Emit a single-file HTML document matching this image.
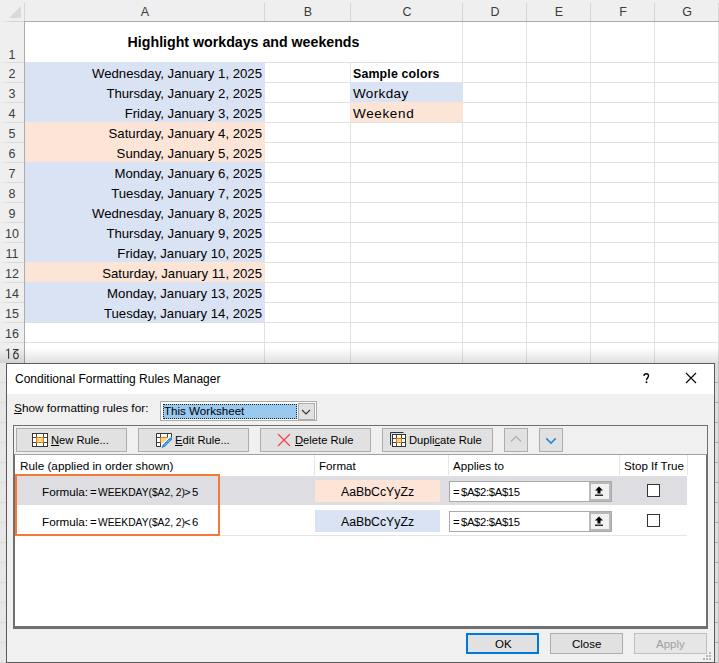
<!DOCTYPE html><html><head><meta charset="utf-8"><style>
*{margin:0;padding:0;box-sizing:border-box}
html,body{width:719px;height:663px;overflow:hidden;background:#fff;position:relative;font-family:"Liberation Sans",sans-serif}
.a{position:absolute}
.t{position:absolute;white-space:nowrap;line-height:20px;height:20px;color:#000}
.b{position:absolute;background:#e1e1e1;border:1px solid #adadad}
.u{text-decoration:underline;text-decoration-thickness:1px;text-underline-offset:0.5px}
</style></head><body>
<div class="a" style="left:0px;top:0px;width:719px;height:21px;background:#efefef"></div>
<div class="a" style="left:0px;top:0px;width:24px;height:663px;background:#efefef"></div>
<div class="a" style="left:264px;top:3px;width:1px;height:18px;background:#d6d6d6"></div>
<div class="a" style="left:350px;top:3px;width:1px;height:18px;background:#d6d6d6"></div>
<div class="a" style="left:462px;top:3px;width:1px;height:18px;background:#d6d6d6"></div>
<div class="a" style="left:526px;top:3px;width:1px;height:18px;background:#d6d6d6"></div>
<div class="a" style="left:590px;top:3px;width:1px;height:18px;background:#d6d6d6"></div>
<div class="a" style="left:654px;top:3px;width:1px;height:18px;background:#d6d6d6"></div>
<div class="a" style="left:718px;top:3px;width:1px;height:18px;background:#d6d6d6"></div>
<div class="t" style="left:25px;top:2px;font-size:12.5px;width:240px;text-align:center;color:#3c3c3c">A</div>
<div class="t" style="left:265px;top:2px;font-size:12.5px;width:86px;text-align:center;color:#3c3c3c">B</div>
<div class="t" style="left:351px;top:2px;font-size:12.5px;width:112px;text-align:center;color:#3c3c3c">C</div>
<div class="t" style="left:463px;top:2px;font-size:12.5px;width:64px;text-align:center;color:#3c3c3c">D</div>
<div class="t" style="left:527px;top:2px;font-size:12.5px;width:64px;text-align:center;color:#3c3c3c">E</div>
<div class="t" style="left:591px;top:2px;font-size:12.5px;width:64px;text-align:center;color:#3c3c3c">F</div>
<div class="t" style="left:655px;top:2px;font-size:12.5px;width:64px;text-align:center;color:#3c3c3c">G</div>
<div class="a" style="left:25px;top:62px;width:694px;height:1px;background:#e1e1e1"></div>
<div class="a" style="left:0px;top:62px;width:24px;height:1px;background:linear-gradient(to right,#efefef,#d9d9d9 40%)"></div>
<div class="a" style="left:25px;top:82px;width:694px;height:1px;background:#e1e1e1"></div>
<div class="a" style="left:0px;top:82px;width:24px;height:1px;background:linear-gradient(to right,#efefef,#d9d9d9 40%)"></div>
<div class="a" style="left:25px;top:102px;width:694px;height:1px;background:#e1e1e1"></div>
<div class="a" style="left:0px;top:102px;width:24px;height:1px;background:linear-gradient(to right,#efefef,#d9d9d9 40%)"></div>
<div class="a" style="left:25px;top:122px;width:694px;height:1px;background:#e1e1e1"></div>
<div class="a" style="left:0px;top:122px;width:24px;height:1px;background:linear-gradient(to right,#efefef,#d9d9d9 40%)"></div>
<div class="a" style="left:25px;top:142px;width:694px;height:1px;background:#e1e1e1"></div>
<div class="a" style="left:0px;top:142px;width:24px;height:1px;background:linear-gradient(to right,#efefef,#d9d9d9 40%)"></div>
<div class="a" style="left:25px;top:162px;width:694px;height:1px;background:#e1e1e1"></div>
<div class="a" style="left:0px;top:162px;width:24px;height:1px;background:linear-gradient(to right,#efefef,#d9d9d9 40%)"></div>
<div class="a" style="left:25px;top:182px;width:694px;height:1px;background:#e1e1e1"></div>
<div class="a" style="left:0px;top:182px;width:24px;height:1px;background:linear-gradient(to right,#efefef,#d9d9d9 40%)"></div>
<div class="a" style="left:25px;top:202px;width:694px;height:1px;background:#e1e1e1"></div>
<div class="a" style="left:0px;top:202px;width:24px;height:1px;background:linear-gradient(to right,#efefef,#d9d9d9 40%)"></div>
<div class="a" style="left:25px;top:222px;width:694px;height:1px;background:#e1e1e1"></div>
<div class="a" style="left:0px;top:222px;width:24px;height:1px;background:linear-gradient(to right,#efefef,#d9d9d9 40%)"></div>
<div class="a" style="left:25px;top:242px;width:694px;height:1px;background:#e1e1e1"></div>
<div class="a" style="left:0px;top:242px;width:24px;height:1px;background:linear-gradient(to right,#efefef,#d9d9d9 40%)"></div>
<div class="a" style="left:25px;top:262px;width:694px;height:1px;background:#e1e1e1"></div>
<div class="a" style="left:0px;top:262px;width:24px;height:1px;background:linear-gradient(to right,#efefef,#d9d9d9 40%)"></div>
<div class="a" style="left:25px;top:282px;width:694px;height:1px;background:#e1e1e1"></div>
<div class="a" style="left:0px;top:282px;width:24px;height:1px;background:linear-gradient(to right,#efefef,#d9d9d9 40%)"></div>
<div class="a" style="left:25px;top:302px;width:694px;height:1px;background:#e1e1e1"></div>
<div class="a" style="left:0px;top:302px;width:24px;height:1px;background:linear-gradient(to right,#efefef,#d9d9d9 40%)"></div>
<div class="a" style="left:25px;top:322px;width:694px;height:1px;background:#e1e1e1"></div>
<div class="a" style="left:0px;top:322px;width:24px;height:1px;background:linear-gradient(to right,#efefef,#d9d9d9 40%)"></div>
<div class="a" style="left:25px;top:342px;width:694px;height:1px;background:#e1e1e1"></div>
<div class="a" style="left:0px;top:342px;width:24px;height:1px;background:linear-gradient(to right,#efefef,#d9d9d9 40%)"></div>
<div class="a" style="left:715px;top:382px;width:4px;height:1px;background:#c8c8c8"></div>
<div class="a" style="left:0px;top:382px;width:6px;height:1px;background:#e4e4e4"></div>
<div class="a" style="left:715px;top:402px;width:4px;height:1px;background:#c8c8c8"></div>
<div class="a" style="left:0px;top:402px;width:6px;height:1px;background:#e4e4e4"></div>
<div class="a" style="left:715px;top:422px;width:4px;height:1px;background:#c8c8c8"></div>
<div class="a" style="left:0px;top:422px;width:6px;height:1px;background:#e4e4e4"></div>
<div class="a" style="left:715px;top:442px;width:4px;height:1px;background:#c8c8c8"></div>
<div class="a" style="left:0px;top:442px;width:6px;height:1px;background:#e4e4e4"></div>
<div class="a" style="left:715px;top:462px;width:4px;height:1px;background:#c8c8c8"></div>
<div class="a" style="left:0px;top:462px;width:6px;height:1px;background:#e4e4e4"></div>
<div class="a" style="left:715px;top:482px;width:4px;height:1px;background:#c8c8c8"></div>
<div class="a" style="left:0px;top:482px;width:6px;height:1px;background:#e4e4e4"></div>
<div class="a" style="left:715px;top:502px;width:4px;height:1px;background:#c8c8c8"></div>
<div class="a" style="left:0px;top:502px;width:6px;height:1px;background:#e4e4e4"></div>
<div class="a" style="left:715px;top:522px;width:4px;height:1px;background:#c8c8c8"></div>
<div class="a" style="left:0px;top:522px;width:6px;height:1px;background:#e4e4e4"></div>
<div class="a" style="left:715px;top:542px;width:4px;height:1px;background:#c8c8c8"></div>
<div class="a" style="left:0px;top:542px;width:6px;height:1px;background:#e4e4e4"></div>
<div class="a" style="left:715px;top:562px;width:4px;height:1px;background:#c8c8c8"></div>
<div class="a" style="left:0px;top:562px;width:6px;height:1px;background:#e4e4e4"></div>
<div class="a" style="left:715px;top:582px;width:4px;height:1px;background:#c8c8c8"></div>
<div class="a" style="left:0px;top:582px;width:6px;height:1px;background:#e4e4e4"></div>
<div class="a" style="left:715px;top:602px;width:4px;height:1px;background:#c8c8c8"></div>
<div class="a" style="left:0px;top:602px;width:6px;height:1px;background:#e4e4e4"></div>
<div class="a" style="left:715px;top:622px;width:4px;height:1px;background:#c8c8c8"></div>
<div class="a" style="left:0px;top:622px;width:6px;height:1px;background:#e4e4e4"></div>
<div class="a" style="left:715px;top:642px;width:4px;height:1px;background:#c8c8c8"></div>
<div class="a" style="left:0px;top:642px;width:6px;height:1px;background:#e4e4e4"></div>
<div class="a" style="left:715px;top:662px;width:4px;height:1px;background:#c8c8c8"></div>
<div class="a" style="left:0px;top:662px;width:6px;height:1px;background:#e4e4e4"></div>
<div class="a" style="left:264px;top:62px;width:1px;height:601px;background:#e1e1e1"></div>
<div class="a" style="left:350px;top:62px;width:1px;height:601px;background:#e1e1e1"></div>
<div class="a" style="left:462px;top:62px;width:1px;height:601px;background:#e1e1e1"></div>
<div class="a" style="left:526px;top:62px;width:1px;height:601px;background:#e1e1e1"></div>
<div class="a" style="left:590px;top:62px;width:1px;height:601px;background:#e1e1e1"></div>
<div class="a" style="left:654px;top:62px;width:1px;height:601px;background:#e1e1e1"></div>
<div class="a" style="left:718px;top:62px;width:1px;height:601px;background:#e1e1e1"></div>
<div class="a" style="left:462px;top:22px;width:1px;height:40px;background:#e1e1e1"></div>
<div class="a" style="left:526px;top:22px;width:1px;height:40px;background:#e1e1e1"></div>
<div class="a" style="left:590px;top:22px;width:1px;height:40px;background:#e1e1e1"></div>
<div class="a" style="left:654px;top:22px;width:1px;height:40px;background:#e1e1e1"></div>
<div class="a" style="left:718px;top:22px;width:1px;height:40px;background:#e1e1e1"></div>
<svg class="a" style="left:0;top:0" width="24" height="21"><polygon points="9,18 21,18 21,6" fill="#d9d9d9"/></svg>
<div class="a" style="left:0px;top:21px;width:24px;height:1px;background:linear-gradient(to right,#efefef,#d4d4d4 50%)"></div>
<div class="a" style="left:24px;top:21px;width:695px;height:1px;background:#ababab"></div>
<div class="a" style="left:24px;top:3px;width:1px;height:18px;background:#d6d6d6"></div>
<div class="a" style="left:24px;top:21px;width:1px;height:642px;background:#ababab"></div>
<div class="t" style="left:0px;top:45px;font-size:12.5px;width:24px;text-align:center;color:#3c3c3c">1</div>
<div class="t" style="left:0px;top:64px;font-size:12.5px;width:24px;text-align:center;color:#3c3c3c">2</div>
<div class="t" style="left:0px;top:84px;font-size:12.5px;width:24px;text-align:center;color:#3c3c3c">3</div>
<div class="t" style="left:0px;top:104px;font-size:12.5px;width:24px;text-align:center;color:#3c3c3c">4</div>
<div class="t" style="left:0px;top:124px;font-size:12.5px;width:24px;text-align:center;color:#3c3c3c">5</div>
<div class="t" style="left:0px;top:144px;font-size:12.5px;width:24px;text-align:center;color:#3c3c3c">6</div>
<div class="t" style="left:0px;top:164px;font-size:12.5px;width:24px;text-align:center;color:#3c3c3c">7</div>
<div class="t" style="left:0px;top:184px;font-size:12.5px;width:24px;text-align:center;color:#3c3c3c">8</div>
<div class="t" style="left:0px;top:204px;font-size:12.5px;width:24px;text-align:center;color:#3c3c3c">9</div>
<div class="t" style="left:0px;top:224px;font-size:12.5px;width:24px;text-align:center;color:#3c3c3c">10</div>
<div class="t" style="left:0px;top:244px;font-size:12.5px;width:24px;text-align:center;color:#3c3c3c">11</div>
<div class="t" style="left:0px;top:264px;font-size:12.5px;width:24px;text-align:center;color:#3c3c3c">12</div>
<div class="t" style="left:0px;top:284px;font-size:12.5px;width:24px;text-align:center;color:#3c3c3c">14</div>
<div class="t" style="left:0px;top:304px;font-size:12.5px;width:24px;text-align:center;color:#3c3c3c">15</div>
<div class="t" style="left:0px;top:324px;font-size:12.5px;width:24px;text-align:center;color:#3c3c3c">16</div>
<svg class="a" style="left:0;top:342px" width="24" height="20"><path d="M6.3 8.6L8.6 7.2V16.8" stroke="#3c3c3c" stroke-width="1.1" fill="none"/><path d="M13 7.5H18.6" stroke="#3c3c3c" stroke-width="1.1"/><path d="M18.3 8.2C15.5 8.6 13.6 10.5 13.6 13.5C13.6 15.5 14.5 16.6 15.9 16.6C17.5 16.6 18.3 15.4 18.3 13.7C18.3 12 17.4 11 16 11C14.8 11 14 11.8 13.7 12.6" stroke="#3c3c3c" stroke-width="1.05" fill="none"/></svg>
<div class="a" style="left:25px;top:62px;width:240px;height:20px;background:#dae3f3"></div>
<div class="t" style="left:25px;top:64px;font-size:13.4px;width:237px;text-align:right;transform:scaleX(0.983);transform-origin:right top;">Wednesday, January 1, 2025</div>
<div class="a" style="left:25px;top:82px;width:240px;height:20px;background:#dae3f3"></div>
<div class="t" style="left:25px;top:84px;font-size:13.4px;width:237px;text-align:right;transform:scaleX(0.983);transform-origin:right top;">Thursday, January 2, 2025</div>
<div class="a" style="left:25px;top:102px;width:240px;height:20px;background:#dae3f3"></div>
<div class="t" style="left:25px;top:104px;font-size:13.4px;width:237px;text-align:right;transform:scaleX(0.983);transform-origin:right top;">Friday, January 3, 2025</div>
<div class="a" style="left:25px;top:122px;width:240px;height:20px;background:#fce4d6"></div>
<div class="t" style="left:25px;top:124px;font-size:13.4px;width:237px;text-align:right;transform:scaleX(0.983);transform-origin:right top;">Saturday, January 4, 2025</div>
<div class="a" style="left:25px;top:142px;width:240px;height:20px;background:#fce4d6"></div>
<div class="t" style="left:25px;top:144px;font-size:13.4px;width:237px;text-align:right;transform:scaleX(0.983);transform-origin:right top;">Sunday, January 5, 2025</div>
<div class="a" style="left:25px;top:162px;width:240px;height:20px;background:#dae3f3"></div>
<div class="t" style="left:25px;top:164px;font-size:13.4px;width:237px;text-align:right;transform:scaleX(0.983);transform-origin:right top;">Monday, January 6, 2025</div>
<div class="a" style="left:25px;top:182px;width:240px;height:20px;background:#dae3f3"></div>
<div class="t" style="left:25px;top:184px;font-size:13.4px;width:237px;text-align:right;transform:scaleX(0.983);transform-origin:right top;">Tuesday, January 7, 2025</div>
<div class="a" style="left:25px;top:202px;width:240px;height:20px;background:#dae3f3"></div>
<div class="t" style="left:25px;top:204px;font-size:13.4px;width:237px;text-align:right;transform:scaleX(0.983);transform-origin:right top;">Wednesday, January 8, 2025</div>
<div class="a" style="left:25px;top:222px;width:240px;height:20px;background:#dae3f3"></div>
<div class="t" style="left:25px;top:224px;font-size:13.4px;width:237px;text-align:right;transform:scaleX(0.983);transform-origin:right top;">Thursday, January 9, 2025</div>
<div class="a" style="left:25px;top:242px;width:240px;height:20px;background:#dae3f3"></div>
<div class="t" style="left:25px;top:244px;font-size:13.4px;width:237px;text-align:right;transform:scaleX(0.983);transform-origin:right top;">Friday, January 10, 2025</div>
<div class="a" style="left:25px;top:262px;width:240px;height:20px;background:#fce4d6"></div>
<div class="t" style="left:25px;top:264px;font-size:13.4px;width:237px;text-align:right;transform:scaleX(0.983);transform-origin:right top;">Saturday, January 11, 2025</div>
<div class="a" style="left:25px;top:282px;width:240px;height:20px;background:#dae3f3"></div>
<div class="t" style="left:25px;top:284px;font-size:13.4px;width:237px;text-align:right;transform:scaleX(0.983);transform-origin:right top;">Monday, January 13, 2025</div>
<div class="a" style="left:25px;top:302px;width:240px;height:20px;background:#dae3f3"></div>
<div class="t" style="left:25px;top:304px;font-size:13.4px;width:237px;text-align:right;transform:scaleX(0.983);transform-origin:right top;">Tuesday, January 14, 2025</div>
<div class="t" style="left:25px;top:32px;font-size:14.2px;width:437px;text-align:center;font-weight:bold">Highlight workdays and weekends</div>
<div class="a" style="left:350px;top:82px;width:113px;height:20px;background:#dae3f3"></div>
<div class="a" style="left:350px;top:102px;width:113px;height:20px;background:#fce4d6"></div>
<div class="t" style="left:353px;top:64px;font-size:12.4px;font-weight:bold;letter-spacing:0.15px">Sample colors</div>
<div class="t" style="left:353px;top:84px;font-size:13.5px;letter-spacing:0.36px">Workday</div>
<div class="t" style="left:353px;top:104px;font-size:13.5px;letter-spacing:0.65px">Weekend</div>
<div class="a" style="left:0px;top:348px;width:719px;height:15px;background:linear-gradient(to bottom,rgba(0,0,0,0),rgba(0,0,0,0.12))"></div>
<div class="a" style="left:715px;top:363px;width:4px;height:300px;background:rgba(0,0,0,0.13)"></div>
<div class="a" style="left:0px;top:363px;width:6px;height:300px;background:rgba(0,0,0,0.03)"></div>
<div class="a" style="left:6px;top:363px;width:709px;height:300px;border:1px solid #5a5a5a;background:#f0f0f0"></div>
<div class="a" style="left:7px;top:364px;width:707px;height:30px;background:#fff"></div>
<div class="t" style="left:15px;top:369px;font-size:12px;">Conditional Formatting Rules Manager</div>
<svg class="a" style="left:643px;top:373px" width="7" height="11"><path d="M0.9 2.9C1.1 1.3 2.2 0.7 3.2 0.7C4.6 0.7 5.5 1.6 5.5 2.8C5.5 4.6 3.5 4.9 3.5 7.2" stroke="#000" stroke-width="1.35" fill="none"/><circle cx="3.5" cy="9.3" r="0.95" fill="#000"/></svg>
<svg class="a" style="left:685px;top:372px" width="12" height="12"><path d="M1 1L11 11M11 1L1 11" stroke="#000" stroke-width="1.1"/></svg>
<div class="t" style="left:14px;top:398px;font-size:11.8px;"><span class="u">S</span>how formatting rules for:</div>
<div class="a" style="left:160px;top:401px;width:157px;height:20px;border:1px solid #acacac;background:#fff"></div>
<div class="a" style="left:163px;top:404px;width:134px;height:15px;background:#99c9ef;outline:1px dotted #222;outline-offset:-1px"></div>
<div class="t" style="left:164px;top:401px;font-size:11.6px;">This Worksheet</div>
<div class="a" style="left:298px;top:403px;width:17px;height:17px;background:#e1e1e1;border:1px solid #adadad"></div>
<svg class="a" style="left:300px;top:408px" width="12" height="8"><path d="M2 2L6 6L10 2" stroke="#333" fill="none" stroke-width="1.1"/></svg>
<div class="a" style="left:13px;top:425px;width:695px;height:204px;border:1px solid #707070;background:#f0f0f0"></div>
<div class="a" style="left:14px;top:454px;width:693px;height:174px;background:#fff;border-top:1px solid #a0a0a0;border-left:1px solid #707070;border-right:1px solid #707070;border-bottom:2px solid #707070"></div>
<div class="a" style="left:16px;top:428px;width:111px;height:24px;background:#e1e1e1;border:1px solid #adadad"></div>
<div class="a" style="left:138px;top:428px;width:111px;height:24px;background:#e1e1e1;border:1px solid #adadad"></div>
<div class="a" style="left:260px;top:428px;width:111px;height:24px;background:#e1e1e1;border:1px solid #adadad"></div>
<div class="a" style="left:382px;top:428px;width:111px;height:24px;background:#e1e1e1;border:1px solid #adadad"></div>
<div class="a" style="left:504px;top:428px;width:24px;height:24px;background:#e1e1e1;border:1px solid #adadad"></div>
<div class="a" style="left:539px;top:428px;width:24px;height:24px;background:#e1e1e1;border:1px solid #adadad"></div>
<div class="t" style="left:51px;top:430px;font-size:11.2px;"><span class="u">N</span>ew Rule...</div>
<div class="t" style="left:175px;top:430px;font-size:11.2px;"><span class="u">E</span>dit Rule...</div>
<div class="t" style="left:295px;top:430px;font-size:11.2px;"><span class="u">D</span>elete Rule</div>
<div class="t" style="left:409px;top:430px;font-size:11.2px;">Dupli<span class="u">c</span>ate Rule</div>
<svg class="a" style="left:32px;top:433px" width="16" height="14"><rect x="0.5" y="0.5" width="15" height="13" fill="#fff" stroke="#333"/><path d="M4.5 0.5V13.5M11.5 0.5V13.5M0.5 4.5H15.5M0.5 9.5H15.5" stroke="#444"/><rect x="4.5" y="4.5" width="7" height="5" fill="#f7d88c" stroke="#e8770e"/></svg>
<svg class="a" style="left:389px;top:431px" width="18" height="17"><path d="M1.5 14V1.5H14.5" stroke="#333" fill="none"/><rect x="3.5" y="3.5" width="13" height="12" fill="#fff" stroke="#333"/><path d="M7.5 3.5V15.5M12.5 3.5V15.5M3.5 7.5H16.5M3.5 11.5H16.5" stroke="#444"/><rect x="7.5" y="7.5" width="5" height="4" fill="#f7d88c" stroke="#e8770e"/></svg>
<svg class="a" style="left:155px;top:432px" width="19" height="17"><path d="M16.5 5.5V1.5H1.5V14.5H6" stroke="#333" fill="none"/><path d="M2 2H16V5.5L8 14H2Z" fill="#fff"/><path d="M5.5 1.5V14.5M12.5 1.5V5.5M1.5 5.5H5.5M1.5 10.5H5.5" stroke="#444"/><path d="M6 6H13L8 11H6Z" fill="#f7d88c"/><path d="M13 5.5H5.5V10.5" stroke="#e8770e" fill="none"/><path d="M6.7 15.9 L7.45 12.93 L14.75 5.73 A1.5 1.5 0 0 1 16.85 7.87 L9.55 15.07 Z" fill="#2b8ad8"/><path d="M9.3 13.2L15.7 6.8" stroke="#fff" stroke-width="1" stroke-dasharray="1 1.2"/></svg>
<svg class="a" style="left:277px;top:433px" width="14" height="14"><path d="M1.5 1.5L12.5 12.5M12.5 1.5L1.5 12.5" stroke="#f04848" stroke-width="1.3" stroke-linecap="round"/></svg>
<svg class="a" style="left:510px;top:435px" width="12" height="10"><path d="M1 6.5L6 1.5L11 6.5" stroke="#acacac" fill="none" stroke-width="1.2"/></svg>
<svg class="a" style="left:545px;top:436px" width="12" height="10"><path d="M1.3 2.4L6 7.1L10.7 2.4" stroke="#2a8ad4" fill="none" stroke-width="1.6"/></svg>
<div class="t" style="left:20px;top:456px;font-size:11.75px;">Rule (applied in order shown)</div>
<div class="t" style="left:319px;top:456px;font-size:11.6px;">Format</div>
<div class="t" style="left:453px;top:456px;font-size:11.6px;">Applies to</div>
<div class="t" style="left:624px;top:456px;font-size:11.6px;">Stop If True</div>
<div class="a" style="left:314px;top:455px;width:1px;height:20px;background:#e5e5e5"></div>
<div class="a" style="left:448px;top:455px;width:1px;height:20px;background:#e5e5e5"></div>
<div class="a" style="left:619px;top:455px;width:1px;height:20px;background:#e5e5e5"></div>
<div class="a" style="left:687px;top:455px;width:1px;height:20px;background:#e5e5e5"></div>
<div class="a" style="left:15px;top:476px;width:672px;height:29px;background:#dddde2"></div>
<div class="a" style="left:15px;top:535px;width:672px;height:1px;background:#e5e5e5"></div>
<div class="t" style="left:42px;top:482px;font-size:11.7px;">Formula:</div>
<div class="t" style="left:90px;top:482px;font-size:11.4px;">=</div>
<div class="t" style="left:98px;top:482px;font-size:11.4px;transform:scaleX(0.9);transform-origin:left top;">WEEKDAY($A2, 2)</div>
<div class="t" style="left:184px;top:482px;font-size:11.4px;">&gt;</div>
<div class="t" style="left:192px;top:482px;font-size:11.4px;">5</div>
<div class="t" style="left:42px;top:512px;font-size:11.7px;">Formula:</div>
<div class="t" style="left:90px;top:512px;font-size:11.4px;">=</div>
<div class="t" style="left:98px;top:512px;font-size:11.4px;transform:scaleX(0.9);transform-origin:left top;">WEEKDAY($A2, 2)</div>
<div class="t" style="left:184px;top:512px;font-size:11.4px;">&lt;</div>
<div class="t" style="left:192px;top:512px;font-size:11.4px;">6</div>
<div class="a" style="left:315px;top:480px;width:125px;height:22px;background:#fce4d6"></div>
<div class="a" style="left:315px;top:510px;width:125px;height:22px;background:#dae3f3"></div>
<div class="t" style="left:341px;top:482px;font-size:12.3px;color:#000">AaBbCcYyZz</div>
<div class="t" style="left:341px;top:512px;font-size:12.3px;color:#000">AaBbCcYyZz</div>
<div class="a" style="left:449px;top:481px;width:163px;height:21px;background:#fff;border:1px solid #a9a9a9"></div>
<div class="t" style="left:453px;top:482px;font-size:11.3px;">=</div>
<div class="t" style="left:461px;top:482px;font-size:11.3px;letter-spacing:-0.35px">$A$2:$A$15</div>
<div class="a" style="left:589px;top:482px;width:22px;height:19px;background:#f2f2f2;border:2px solid #b9b9b9"></div>
<svg class="a" style="left:594px;top:486px" width="10" height="10"><path d="M5 0.5L1 4.5H3.5V7.5H6.5V4.5H9Z" fill="#000"/><rect x="1" y="8.6" width="8" height="1.2" fill="#000"/></svg>
<div class="a" style="left:647px;top:484px;width:13px;height:13px;background:#fff;border:1px solid #333"></div>
<div class="a" style="left:449px;top:511px;width:163px;height:21px;background:#fff;border:1px solid #a9a9a9"></div>
<div class="t" style="left:453px;top:512px;font-size:11.3px;">=</div>
<div class="t" style="left:461px;top:512px;font-size:11.3px;letter-spacing:-0.35px">$A$2:$A$15</div>
<div class="a" style="left:589px;top:512px;width:22px;height:19px;background:#f2f2f2;border:2px solid #b9b9b9"></div>
<svg class="a" style="left:594px;top:516px" width="10" height="10"><path d="M5 0.5L1 4.5H3.5V7.5H6.5V4.5H9Z" fill="#000"/><rect x="1" y="8.6" width="8" height="1.2" fill="#000"/></svg>
<div class="a" style="left:647px;top:514px;width:13px;height:13px;background:#fff;border:1px solid #333"></div>
<div class="a" style="left:15px;top:474px;width:205px;height:62px;border:2px solid #f37a36"></div>
<div class="a" style="left:466px;top:633px;width:73px;height:21px;background:#e1e1e1;border:2px solid #0078d7"></div>
<div class="a" style="left:550px;top:633px;width:73px;height:21px;background:#e1e1e1;border:1px solid #adadad"></div>
<div class="a" style="left:634px;top:633px;width:73px;height:21px;background:#e6e6e6;border:1px solid #bfbfbf"></div>
<div class="t" style="left:495px;top:634px;font-size:11.5px;">OK</div>
<div class="t" style="left:572px;top:634px;font-size:11.5px;">Close</div>
<div class="t" style="left:656px;top:634px;font-size:11.5px;color:#a0a0a0">Apply</div>
<div class="a" style="left:709px;top:652px;width:2px;height:2px;background:#b8b8b8"></div>
<div class="a" style="left:706px;top:655px;width:2px;height:2px;background:#b8b8b8"></div>
<div class="a" style="left:709px;top:655px;width:2px;height:2px;background:#b8b8b8"></div>
<div class="a" style="left:703px;top:658px;width:2px;height:2px;background:#b8b8b8"></div>
<div class="a" style="left:706px;top:658px;width:2px;height:2px;background:#b8b8b8"></div>
<div class="a" style="left:709px;top:658px;width:2px;height:2px;background:#b8b8b8"></div>
</body></html>
